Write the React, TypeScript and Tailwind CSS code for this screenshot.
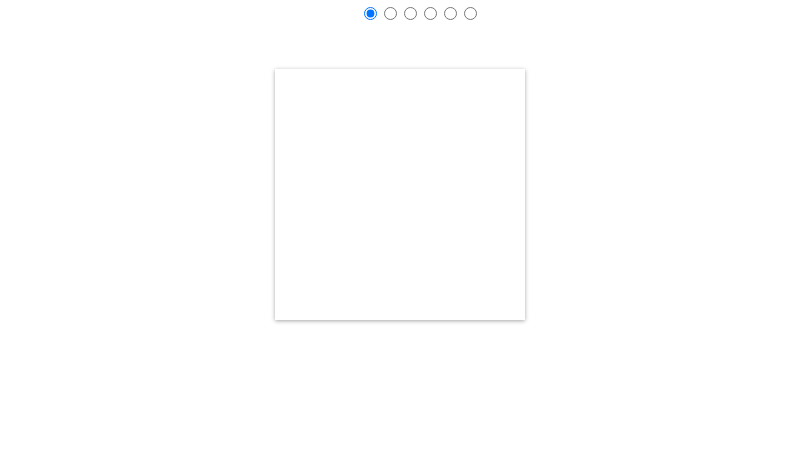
import React, { useState } from 'react';

export default function App() {
  const [selected, setSelected] = useState(0);
  const options = [0, 1, 2, 3, 4, 5];

  return (
    <div className="w-[800px] h-[450px] bg-white">
      <div className="flex justify-center gap-[7px] pl-[40px] pt-[7px]">
        {options.map((i) => (
          <input
            key={i}
            type="radio"
            name="slide"
            checked={selected === i}
            onChange={() => setSelected(i)}
            className="m-0 w-[13px] h-[13px]"
          />
        ))}
      </div>
      <div className="flex justify-center mt-[49px]">
        <div className="w-[250px] h-[251px] bg-white shadow-[0_1px_4px_rgba(0,0,0,0.35)]" />
      </div>
    </div>
  );
}
